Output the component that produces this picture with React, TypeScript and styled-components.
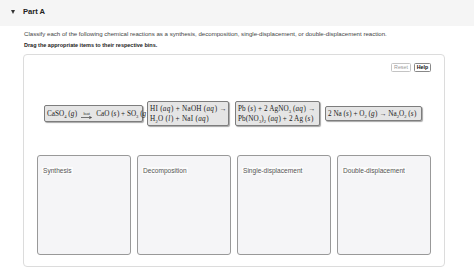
import React from "react";
import styled, { createGlobalStyle } from "styled-components";

const Global = createGlobalStyle`
  html, body { margin: 0; padding: 0; background: #fff; }
  body { font-family: "Liberation Sans", Arial, sans-serif; color: #333; }
`;

const Page = styled.div`
  width: 474px;
  height: 271px;
  overflow: hidden;
  display: flex;
  flex-direction: column;
`;

const Header = styled.div`
  height: 26px;
  box-sizing: border-box;
  background: #f5f5f5;
  display: flex;
  align-items: flex-start;
  padding: 7px 0 0 11px;
  gap: 8px;
`;

const Caret = styled.span`
  width: 0;
  height: 0;
  margin-top: 3px;
  border-left: 2.5px solid transparent;
  border-right: 2.5px solid transparent;
  border-top: 4px solid #333;
`;

const Title = styled.span`
  font-size: 7.6px;
  font-weight: bold;
  color: #222;
  line-height: 9px;
`;

const Body = styled.div`
  padding: 4px 0 0 23px;
  display: flex;
  flex-direction: column;
`;

const Para = styled.p<{ $bold?: boolean }>`
  margin: 0 0 5px 1px;
  font-size: ${(p) => (p.$bold ? "5.5px" : "6.1px")};
  line-height: 7px;
  font-weight: ${(p) => (p.$bold ? "bold" : "normal")};
  color: ${(p) => (p.$bold ? "#222" : "#444")};
`;

const Panel = styled.div`
  width: 422px;
  height: 213px;
  box-sizing: border-box;
  border: 1px solid #dcdcdc;
  border-radius: 4px;
  padding: 8px 13px 11px 13px;
  display: flex;
  flex-direction: column;
`;

const Toolbar = styled.div`
  display: flex;
  justify-content: flex-end;
  gap: 3px;
  height: 9px;
`;

const ToolButton = styled.button<{ $primary?: boolean }>`
  font-family: "Liberation Sans", Arial, sans-serif;
  font-size: 5.3px;
  line-height: 7px;
  height: 9px;
  padding: 0 1px;
  background: #fff;
  border: 1px solid ${(p) => (p.$primary ? "#888" : "#c4c4c4")};
  border-radius: 1.5px;
  color: ${(p) => (p.$primary ? "#111" : "#999")};
  font-weight: ${(p) => (p.$primary ? "bold" : "normal")};
  width: ${(p) => (p.$primary ? "17px" : "20px")};
`;

const ChipArea = styled.div`
  flex: 1;
  display: flex;
  align-items: center;
  padding-left: 7px;
  gap: 4px;
`;

const Chip = styled.div<{ $w: number; $h: number; $front?: boolean; $spread?: number }>`
  width: ${(p) => p.$w}px;
  height: ${(p) => p.$h}px;
  flex: none;
  box-sizing: border-box;
  background: #e5e5e5;
  border: 1px solid #7d7d7d;
  border-radius: 2px;
  box-shadow: 1px 1px 1px rgba(0, 0, 0, 0.35);
  display: flex;
  flex-direction: column;
  justify-content: center;
  padding-left: 2px;
  font-family: "Liberation Serif", "Times New Roman", serif;
  font-size: 7.2px;
  line-height: 10px;
  letter-spacing: ${(p) => p.$spread ?? 0}px;
  color: #222;
  white-space: nowrap;
  position: relative;
  z-index: ${(p) => (p.$front ? 1 : 0)};
`;

const Line = styled.div``;

const Sub = styled.sub`
  font-size: 4.6px;
  vertical-align: -1.5px;
  line-height: 0;
`;

const It = styled.i`
  font-style: italic;
  padding-right: 0.5px;
`;

const Heat = styled.span`
  display: inline-flex;
  flex-direction: column;
  align-items: center;
  vertical-align: 1px;
  margin: 0 4px;
  line-height: 3px;
`;

const HeatLabel = styled.span`
  font-size: 3.8px;
  line-height: 4px;
`;

const Bins = styled.div`
  display: flex;
  gap: 6px;
`;

const Bin = styled.div`
  width: 94px;
  height: 100px;
  box-sizing: border-box;
  border: 1px solid #999;
  border-radius: 3px;
  background: #f5f5f7;
  padding: 3px 4px;
`;

const BinLabel = styled.span`
  display: inline-block;
  font-size: 6.6px;
  line-height: 7px;
  color: #555;
  background: #fbfbfb;
  padding: 0 1px;
`;

const Arrow = () => <span> → </span>;

const LongArrow = () => (
  <svg width="11" height="3" viewBox="0 0 11 3" style={{ display: "block" }}>
    <line x1="0" y1="1.5" x2="10" y2="1.5" stroke="#222" strokeWidth="0.6" />
    <path d="M8.2 0.3 L10.6 1.5 L8.2 2.7" fill="none" stroke="#222" strokeWidth="0.6" />
  </svg>
);

export default function App() {
  return (
    <Page>
      <Global />
      <Header>
        <Caret />
        <Title>Part A</Title>
      </Header>
      <Body>
        <Para>
          Classify each of the following chemical reactions as a synthesis, decomposition, single-displacement, or
          double-displacement reaction.
        </Para>
        <Para $bold>Drag the appropriate items to their respective bins.</Para>
        <Panel>
          <Toolbar>
            <ToolButton>Reset</ToolButton>
            <ToolButton $primary>Help</ToolButton>
          </Toolbar>
          <ChipArea>
            <Chip $w={99} $h={17}>
              <Line>
                CaSO<Sub>4</Sub> (<It>g</It>)
                <Heat>
                  <HeatLabel>heat</HeatLabel>
                  <LongArrow />
                </Heat>
                CaO (<It>s</It>) + SO<Sub>3</Sub> (<It>g</It>)
              </Line>
            </Chip>
            <Chip $w={82} $h={25} $front $spread={0.25}>
              <Line>
                HI (<It>aq</It>) + NaOH (<It>aq</It>)<Arrow />
              </Line>
              <Line>
                H<Sub>2</Sub>O (<It>l</It>) + NaI (<It>aq</It>)
              </Line>
            </Chip>
            <Chip $w={85} $h={25} $spread={0.1} style={{ marginLeft: 2 }}>
              <Line>
                Pb (<It>s</It>) + 2 AgNO<Sub>3</Sub> (<It>aq</It>)<Arrow />
              </Line>
              <Line>
                Pb(NO<Sub>3</Sub>)<Sub>2</Sub> (<It>aq</It>) + 2 Ag (<It>s</It>)
              </Line>
            </Chip>
            <Chip $w={97} $h={15} style={{ marginLeft: 1 }}>
              <Line>
                2 Na (<It>s</It>) + O<Sub>2</Sub> (<It>g</It>)<Arrow />Na<Sub>2</Sub>O<Sub>2</Sub> (<It>s</It>)
              </Line>
            </Chip>
          </ChipArea>
          <Bins>
            <Bin>
              <BinLabel>Synthesis</BinLabel>
            </Bin>
            <Bin>
              <BinLabel>Decomposition</BinLabel>
            </Bin>
            <Bin>
              <BinLabel>Single-displacement</BinLabel>
            </Bin>
            <Bin>
              <BinLabel>Double-displacement</BinLabel>
            </Bin>
          </Bins>
        </Panel>
      </Body>
    </Page>
  );
}
